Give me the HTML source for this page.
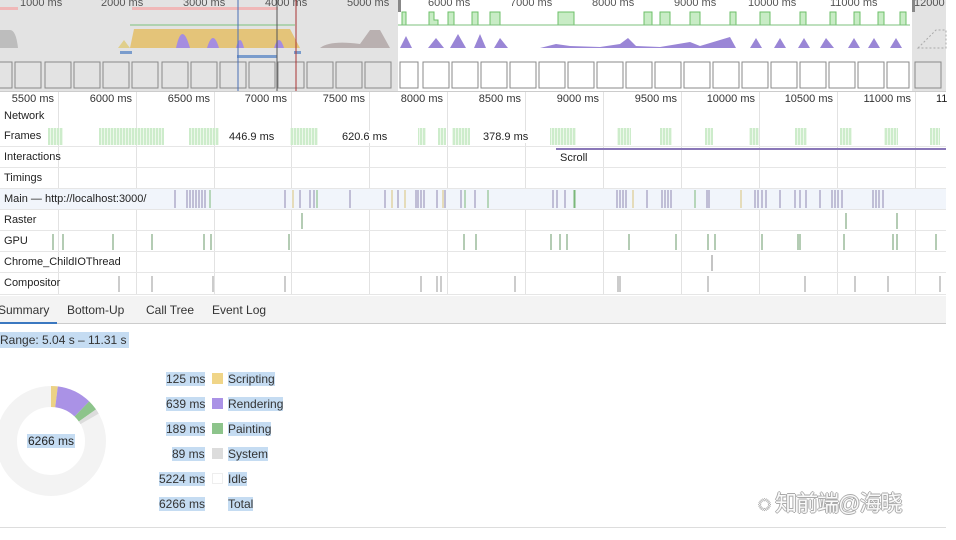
<!DOCTYPE html>
<html><head><meta charset="utf-8"><style>
*{margin:0;padding:0;box-sizing:border-box}
body{width:956px;height:540px;overflow:hidden;background:#fff;font-family:"Liberation Sans",sans-serif;font-size:11px;color:#222;position:relative}
.a{position:absolute}
.lbl{position:absolute;left:4px;font-size:11px;color:#222}
.row{position:absolute;left:0;width:946px;border-bottom:1px solid #e6e6e6}
.gl{position:absolute;top:92px;height:203px;width:1px;background:#e2e2e2}
.tk{position:absolute;top:93px;font-size:11px;color:#333;text-align:right;width:70px}
.hl{background:#c5dcf2}
.leg{position:absolute;font-size:12px;color:#333}
</style></head><body>
<!-- overview -->
<div class="a" style="left:0;top:0;width:398px;height:92px;background:#e3e3e3"></div>
<div class="a" style="left:398px;top:0;width:514px;height:92px;background:#fff"></div>
<div class="a" style="left:912px;top:0;width:34px;height:92px;background:#e3e3e3"></div>
<svg class="a" style="left:0;top:0" width="956" height="92">
 <g font-family="Liberation Sans" font-size="11" fill="#555">
  <text x="20" y="6">1000 ms</text><text x="101" y="6">2000 ms</text><text x="183" y="6">3000 ms</text><text x="265" y="6">4000 ms</text><text x="347" y="6">5000 ms</text><text x="428" y="6">6000 ms</text><text x="510" y="6">7000 ms</text><text x="592" y="6">8000 ms</text><text x="674" y="6">9000 ms</text><text x="748" y="6">10000 ms</text><text x="830" y="6">11000 ms</text><text x="914" y="6">12000</text>
 </g>
 <rect x="0" y="7" width="18" height="3" fill="#f0b8b8"/><rect x="132" y="7" width="146" height="3" fill="#f0b8b8"/>
 <line x1="130" y1="25" x2="295" y2="25" stroke="#7dc07d"/>
 <path d="M0 30 L10 30 Q16 30 18 48 L0 48Z" fill="#bdbdbd"/>
 <path d="M118 48 L124 40 L130 48Z" fill="#e0cf8c"/>
 <path d="M130 48 L134 29 L290 29 L300 48Z" fill="#e4c479"/>
 <path d="M176 48 Q182 20 190 48Z M207 48 Q213 28 219 48Z M236 48 Q240 32 244 48Z M274 48 Q279 32 284 48Z" fill="#a58de0"/>
 <path d="M320 48 Q330 40 360 44 L370 30 L380 30 L390 48Z" fill="#b9b0b0"/>
 <rect x="120" y="51" width="12" height="3" fill="#7a9ccc"/><rect x="237" y="55" width="40" height="3" fill="#7a9ccc"/><rect x="294" y="51" width="7" height="3" fill="#7a9ccc"/>
 <path d="M402 25 V12 H406 V25 M429 25 V12 H434 V20 H438 V25 M448 25 V12 H454 V25 M472 25 V12 H478 V25 M490 25 V12 H500 V25 M558 25 V12 H574 V25 M644 25 V12 H652 V25 M660 25 V12 H670 V25 M690 25 V12 H700 V25 M730 25 V12 H736 V25 M760 25 V12 H770 V25 M800 25 V12 H806 V25 M830 25 V12 H836 V25 M854 25 V12 H860 V25 M878 25 V12 H884 V25 M900 25 V12 H906 V25" fill="#c8ecc5" stroke="#6cbf68"/>
 <line x1="398" y1="25" x2="910" y2="25" stroke="#7dc07d"/>
 <path d="M400 48 L406 36 L412 48 L428 48 L436 38 L444 48 L450 48 L458 34 L466 48 L474 48 L480 34 L486 48 L494 48 L500 38 L508 48 L540 48 L556 44 L570 46 L600 47 L620 44 L628 38 L636 46 L660 47 L690 42 L700 46 L730 37 L736 48 L750 48 L756 38 L762 48 L774 48 L780 38 L786 48 L798 48 L804 38 L810 48 L820 48 L826 38 L834 48 L848 48 L854 38 L860 48 L868 48 L874 38 L880 48 L890 48 L896 38 L902 48Z" fill="#9a86d6"/>
 <path d="M918 48 L936 30 L946 30 L946 48Z" fill="none" stroke="#aaa" stroke-dasharray="2 2"/>
 <g fill="none" stroke="#888" stroke-width="1">
  <rect x="-1" y="62" width="13" height="26"/><rect x="15" y="62" width="26" height="26"/><rect x="45" y="62" width="26" height="26"/><rect x="74" y="62" width="26" height="26"/><rect x="103" y="62" width="26" height="26"/><rect x="132" y="62" width="26" height="26"/><rect x="162" y="62" width="26" height="26"/><rect x="191" y="62" width="26" height="26"/><rect x="220" y="62" width="26" height="26"/><rect x="249" y="62" width="26" height="26"/><rect x="278" y="62" width="26" height="26"/><rect x="307" y="62" width="26" height="26"/><rect x="336" y="62" width="26" height="26"/><rect x="365" y="62" width="26" height="26"/>
  <rect x="400" y="62" width="18" height="26"/><rect x="423" y="62" width="26" height="26"/><rect x="452" y="62" width="26" height="26"/><rect x="481" y="62" width="26" height="26"/><rect x="510" y="62" width="26" height="26"/><rect x="539" y="62" width="26" height="26"/><rect x="568" y="62" width="26" height="26"/><rect x="597" y="62" width="26" height="26"/><rect x="626" y="62" width="26" height="26"/><rect x="655" y="62" width="26" height="26"/><rect x="684" y="62" width="26" height="26"/><rect x="713" y="62" width="26" height="26"/><rect x="742" y="62" width="26" height="26"/><rect x="771" y="62" width="26" height="26"/><rect x="800" y="62" width="26" height="26"/><rect x="829" y="62" width="26" height="26"/><rect x="858" y="62" width="26" height="26"/><rect x="887" y="62" width="22" height="26"/><rect x="915" y="62" width="26" height="26"/>
 </g>
 <line x1="238" y1="0" x2="238" y2="92" stroke="#4a6fb5"/>
 <line x1="277" y1="0" x2="277" y2="92" stroke="#555"/>
 <line x1="296" y1="0" x2="296" y2="92" stroke="#a33"/>
 <rect x="398" y="0" width="3" height="12" fill="#888"/><rect x="912" y="0" width="3" height="12" fill="#888"/>
 <line x1="0" y1="91.5" x2="946" y2="91.5" stroke="#ccc"/>
</svg>
<!-- grid lines -->
<div class="gl" style="left:58px"></div><div class="gl" style="left:136px"></div><div class="gl" style="left:214px"></div><div class="gl" style="left:291px"></div><div class="gl" style="left:369px"></div><div class="gl" style="left:447px"></div><div class="gl" style="left:525px"></div><div class="gl" style="left:603px"></div><div class="gl" style="left:681px"></div><div class="gl" style="left:759px"></div><div class="gl" style="left:837px"></div><div class="gl" style="left:915px"></div>
<div class="tk" style="left:-16px">5500 ms</div><div class="tk" style="left:62px">6000 ms</div><div class="tk" style="left:140px">6500 ms</div><div class="tk" style="left:217px">7000 ms</div><div class="tk" style="left:295px">7500 ms</div><div class="tk" style="left:373px">8000 ms</div><div class="tk" style="left:451px">8500 ms</div><div class="tk" style="left:529px">9000 ms</div><div class="tk" style="left:607px">9500 ms</div><div class="tk" style="left:685px">10000 ms</div><div class="tk" style="left:763px">10500 ms</div><div class="tk" style="left:841px">11000 ms</div><div class="a" style="left:936px;top:93px">11</div>
<!-- rows -->
<div class="row" style="top:108px;height:19px;border:none"></div>
<div class="lbl" style="top:110px">Network</div>
<div class="row" style="top:127px;height:20px"></div>
<svg class="a" style="left:0;top:127px" width="946" height="20"><defs><pattern id="st" width="3" height="20" patternUnits="userSpaceOnUse"><rect width="2" height="20" fill="#cdeccb"/><rect x="2" width="1" height="20" fill="#ecf8ea"/></pattern></defs><g fill="url(#st)">
<rect x="48" y="1" width="15" height="17"/><rect x="99" y="1" width="65" height="17"/><rect x="189" y="1" width="30" height="17"/><rect x="290" y="1" width="28" height="17"/><rect x="418" y="1" width="8" height="17"/><rect x="438" y="1" width="8" height="17"/><rect x="452" y="1" width="18" height="17"/><rect x="550" y="1" width="26" height="17"/><rect x="617" y="1" width="14" height="17"/><rect x="660" y="1" width="12" height="17"/><rect x="705" y="1" width="8" height="17"/><rect x="749" y="1" width="10" height="17"/><rect x="795" y="1" width="12" height="17"/><rect x="840" y="1" width="12" height="17"/><rect x="884" y="1" width="14" height="17"/><rect x="930" y="1" width="10" height="17"/></g></svg>
<div class="lbl" style="top:130px">Frames</div>
<div class="a" style="left:229px;top:131px;background:#fff">446.9 ms</div>
<div class="a" style="left:342px;top:131px;background:#fff">620.6 ms</div>
<div class="a" style="left:483px;top:131px;background:#fff">378.9 ms</div>
<div class="row" style="top:147px;height:21px"></div>
<div class="a" style="left:556px;top:148px;width:390px;height:2px;background:#8a78b8"></div>
<div class="a" style="left:560px;top:152px">Scroll</div>
<div class="lbl" style="top:151px">Interactions</div>
<div class="row" style="top:168px;height:21px"></div>
<div class="lbl" style="top:172px">Timings</div>
<div class="row" style="top:189px;height:21px;background:#f1f5fb"></div>
<svg class="a" style="left:0;top:190px" width="946" height="19"><g stroke="#8f87b0" stroke-width="1">
<path d="M175 0V18M187 0V18M190 0V18M193 0V18M196 0V18M199 0V18M202 0V18M205 0V18M285 0V18M300 0V18M310 0V18M314 0V18M350 0V18M385 0V18M398 0V18M416 0V18M418 0V18M421 0V18M424 0V18M437 0V18M445 0V18M461 0V18M475 0V18M553 0V18M557 0V18M565 0V18M617 0V18M620 0V18M623 0V18M626 0V18M647 0V18M662 0V18M665 0V18M668 0V18M671 0V18M707 0V18M709 0V18M755 0V18M758 0V18M762 0V18M766 0V18M780 0V18M795 0V18M800 0V18M806 0V18M820 0V18M832 0V18M835 0V18M838 0V18M842 0V18M873 0V18M876 0V18M879 0V18M883 0V18"/></g>
<g stroke="#d9c27a"><path d="M293 0V18M392 0V18M405 0V18M443 0V18M633 0V18M741 0V18"/></g>
<g stroke="#7ab87a"><path d="M210 0V18M317 0V18M465 0V18M488 0V18M574 0V18M575 0V18M695 0V18"/></g></svg>
<div class="lbl" style="top:193px;background:#f1f5fb">Main — http://localhost:3000/</div>
<div class="row" style="top:210px;height:21px"></div>
<svg class="a" style="left:0;top:211px" width="946" height="20"><path d="M302 2V18M846 2V18M897 2V18" stroke="#6a9a6a"/></svg>
<div class="lbl" style="top:214px">Raster</div>
<div class="row" style="top:231px;height:21px"></div>
<svg class="a" style="left:0;top:232px" width="946" height="20"><path d="M53 2V18M63 2V18M113 2V18M152 2V18M204 2V18M211 2V18M289 2V18M464 2V18M476 2V18M551 2V18M560 2V18M567 2V18M629 2V18M676 2V18M708 2V18M715 2V18M762 2V18M798 2V18M800 2V18M844 2V18M893 2V18M897 2V18M936 2V18" stroke="#6a9a6a"/></svg>
<div class="lbl" style="top:235px">GPU</div>
<div class="row" style="top:252px;height:21px"></div>
<svg class="a" style="left:0;top:253px" width="946" height="20"><path d="M712 2V18" stroke="#888"/></svg>
<div class="lbl" style="top:256px">Chrome_ChildIOThread</div>
<div class="row" style="top:273px;height:22px"></div>
<svg class="a" style="left:0;top:274px" width="946" height="20"><path d="M119 2V18M152 2V18M213 2V18M285 2V18M421 2V18M437 2V18M441 2V18M515 2V18M618 2V18M620 2V18M708 2V18M805 2V18M855 2V18M888 2V18M940 2V18" stroke="#999"/></svg>
<div class="lbl" style="top:277px">Compositor</div>
<!-- tabs -->
<div class="a" style="left:0;top:296px;width:946px;height:28px;background:#f3f3f3;border-bottom:1px solid #ccc"></div>
<div class="a" style="left:0;top:322px;width:57px;height:2px;background:#3b78c0"></div>
<div class="a" style="left:-2px;top:303px;font-size:12px;color:#333">Summary</div>
<div class="a" style="left:67px;top:303px;font-size:12px;color:#333">Bottom-Up</div>
<div class="a" style="left:146px;top:303px;font-size:12px;color:#333">Call Tree</div>
<div class="a" style="left:212px;top:303px;font-size:12px;color:#333">Event Log</div>
<div class="a hl" style="left:0;top:332px;padding:1px 2px 1px 0;font-size:12px;color:#333">Range: 5.04 s – 11.31 s</div>
<!-- donut -->
<svg class="a" style="left:0;top:386px" width="110" height="112">
 <circle cx="51" cy="55" r="44.5" fill="none" stroke="#f3f3f3" stroke-width="21"/>
 <g transform="rotate(-90 51 55)" fill="none" stroke-width="21">
  <circle cx="51" cy="55" r="44.5" stroke="#ecd285" stroke-dasharray="5.6 300" stroke-dashoffset="0"/>
  <circle cx="51" cy="55" r="44.5" stroke="#aa92e6" stroke-dasharray="28.5 300" stroke-dashoffset="-5.6"/>
  <circle cx="51" cy="55" r="44.5" stroke="#8dc48b" stroke-dasharray="8.5 300" stroke-dashoffset="-34.1"/>
  <circle cx="51" cy="55" r="44.5" stroke="#dcdcdc" stroke-dasharray="4 300" stroke-dashoffset="-42.6"/>
 </g>
</svg>
<div class="a hl" style="left:27px;top:434px;font-size:12px;padding:0 1px">6266 ms</div>
<!-- legend -->
<div class="leg hl" style="left:166px;top:372px">125 ms</div><div class="a" style="left:212px;top:373px;width:11px;height:11px;background:#f0d588"></div><div class="leg hl" style="left:228px;top:372px">Scripting</div>
<div class="leg hl" style="left:166px;top:397px">639 ms</div><div class="a" style="left:212px;top:398px;width:11px;height:11px;background:#aa92e6"></div><div class="leg hl" style="left:228px;top:397px">Rendering</div>
<div class="leg hl" style="left:166px;top:422px">189 ms</div><div class="a" style="left:212px;top:423px;width:11px;height:11px;background:#8dc48b"></div><div class="leg hl" style="left:228px;top:422px">Painting</div>
<div class="leg hl" style="left:172px;top:447px">89 ms</div><div class="a" style="left:212px;top:448px;width:11px;height:11px;background:#dcdcdc"></div><div class="leg hl" style="left:228px;top:447px">System</div>
<div class="leg hl" style="left:159px;top:472px">5224 ms</div><div class="a" style="left:212px;top:473px;width:11px;height:11px;background:#fff;border:1px solid #eee"></div><div class="leg hl" style="left:228px;top:472px">Idle</div>
<div class="leg hl" style="left:159px;top:497px">6266 ms</div><div class="leg hl" style="left:228px;top:497px">Total</div>
<!-- watermark -->
<div class="a" style="left:758px;top:486px;font-family:'Liberation Sans','Noto Sans CJK SC',sans-serif;font-size:22px;color:#fafafa;text-shadow:1px 0 #aaa,-1px 0 #aaa,0 1px #aaa,0 -1px #aaa;letter-spacing:-1px">◌ 知前端@海晓</div>
<div class="a" style="left:0;top:527px;width:946px;height:1px;background:#ddd"></div>
</body></html>
